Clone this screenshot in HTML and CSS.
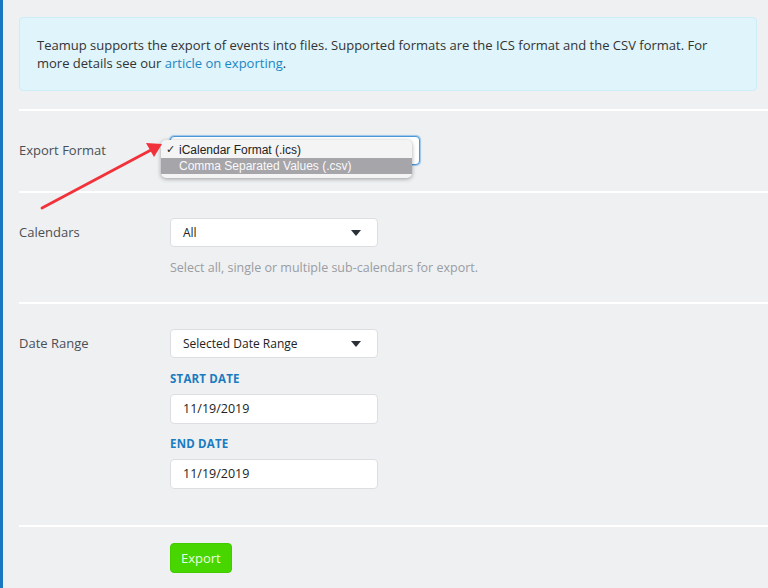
FILE: index.html
```html
<!DOCTYPE html>
<html>
  <head>
    <title>Export Events</title>
    <link rel="stylesheet" href="styles.css">
  </head>
  <body>
    <div class="page">

      <div class="notice">
        Teamup supports the export of events into files. Supported formats are the ICS format and the CSV format. For
        more details see our <a href="#">article on exporting</a>.
      </div>

      <div class="row">
        <label class="label">Export Format</label>
        <div class="field">
          <div class="select focused"></div>
          <ul class="menu">
            <li class="checked">iCalendar Format (.ics)</li>
            <li class="hover">Comma Separated Values (.csv)</li>
          </ul>
        </div>
      </div>

      <div class="row short">
        <label class="label">Calendars</label>
        <div class="field">
          <div class="select narrow">All<span class="caret"></span></div>
          <p class="help">Select all, single or multiple sub-calendars for export.</p>
        </div>
      </div>

      <div class="row tall">
        <label class="label">Date Range</label>
        <div class="field">
          <div class="select narrow">Selected Date Range<span class="caret"></span></div>
          <div class="sub">Start Date</div>
          <div class="input">11/19/2019</div>
          <div class="sub">End Date</div>
          <div class="input">11/19/2019</div>
        </div>
      </div>

      <div class="row last">
        <span class="label"></span>
        <div class="field">
          <button class="export">Export</button>
        </div>
      </div>

      <!-- annotation arrow pointing at the open dropdown -->
      <svg class="arrow" width="170" height="220" viewBox="0 0 170 220">
        <line x1="42" y1="208" x2="151" y2="150" stroke="#f2323a" stroke-width="2.8" stroke-linecap="round"/>
        <polygon points="162,144 146,143 154,157" fill="#f2323a"/>
      </svg>
    </div>
  </body>
</html>
```

FILE: styles.css
```css
*,
*:before,
*:after {
  box-sizing: border-box;
}
html,
body {
  margin: 0px;
  padding: 0px;
  background: #eff0f2;
  font-family: "Open Sans", sans-serif;
  color: #444;
}

.page {
  position: relative;
  min-height: 588px;
  border-left: 3px solid #1a76c0;
  padding: 17px 0px 0px 16px;
}

.notice {
  margin-right: 11px;
  margin-bottom: 18px;
  padding: 18px 17px 18px 17px;
  background: #dff4fb;
  border: 1px solid #ccecf6;
  border-radius: 4px;
  font-size: 13px;
  line-height: 18px;
  color: #333;
}

.notice a {
  color: #1c86c2;
  text-decoration: none;
}

.row {
  display: flex;
  border-top: 2px solid #fff;
  padding: 25px 0px 26px 0px;
}

.row.short {
  padding-bottom: 25px;
}

.row.tall {
  padding-bottom: 36px;
}

.row.last {
  padding-top: 16px;
  padding-bottom: 20px;
}

.label {
  width: 151px;
  flex-shrink: 0;
  font-size: 13px;
  line-height: 29px;
  color: #4a4f55;
}

.field {
  position: relative;
}

.select {
  position: relative;
  width: 208px;
  height: 29px;
  padding: 0px 12px;
  background: #fff;
  border: 1px solid #dcdee2;
  border-radius: 4px;
  font-size: 12px;
  line-height: 27px;
  color: #222;
}

.select.focused {
  width: 250px;
  border-color: #4d97d6;
  box-shadow: 0px 0px 1px 1px #9cc6ea;
}

.caret {
  position: absolute;
  right: 16px;
  top: 11px;
  border-left: 5px solid transparent;
  border-right: 5px solid transparent;
  border-top: 6px solid #2a3038;
}

.menu {
  position: absolute;
  left: -9px;
  top: 4px;
  width: 251px;
  margin: 0px;
  padding: 2px 0px 4px 0px;
  list-style: none;
  background: #f4f4f5;
  border-radius: 5px;
  box-shadow: 0px 1px 4px rgba(0, 0, 0, 0.35);
  font-family: "Liberation Sans", Arial, sans-serif;
  font-size: 12px;
  line-height: 16px;
  color: #222;
}

.menu li {
  padding-left: 18px;
  position: relative;
}

.menu li.checked:before {
  content: "\2713";
  position: absolute;
  left: 5px;
  top: 0px;
  font-family: "DejaVu Sans", sans-serif;
  font-size: 11px;
  font-weight: bold;
}

.menu li.hover {
  background: #a6a5aa;
  color: #fafafa;
}

.help {
  margin: 12px 0px 0px 0px;
  font-size: 12.5px;
  line-height: 18px;
  color: #9a9da2;
}

.sub {
  margin-top: 13px;
  margin-bottom: 7px;
  font-size: 11.5px;
  font-weight: bold;
  line-height: 16px;
  letter-spacing: 0.2px;
  text-transform: uppercase;
  color: #1a7cc0;
}

.input + .sub {
  margin-top: 12px;
  margin-bottom: 7px;
}

.input {
  width: 208px;
  height: 30px;
  padding: 0px 12px;
  background: #fff;
  border: 1px solid #dcdee2;
  border-radius: 4px;
  font-size: 12.5px;
  line-height: 28px;
  color: #222;
}

.export {
  height: 30px;
  padding: 0px 10px;
  border: 1px solid #42cc00;
  border-radius: 4px;
  background: #47d600;
  font-family: "Open Sans", sans-serif;
  font-size: 13px;
  color: #eaffe0;
}

.arrow {
  position: absolute;
  left: -3px;
  top: 0px;
}
```
